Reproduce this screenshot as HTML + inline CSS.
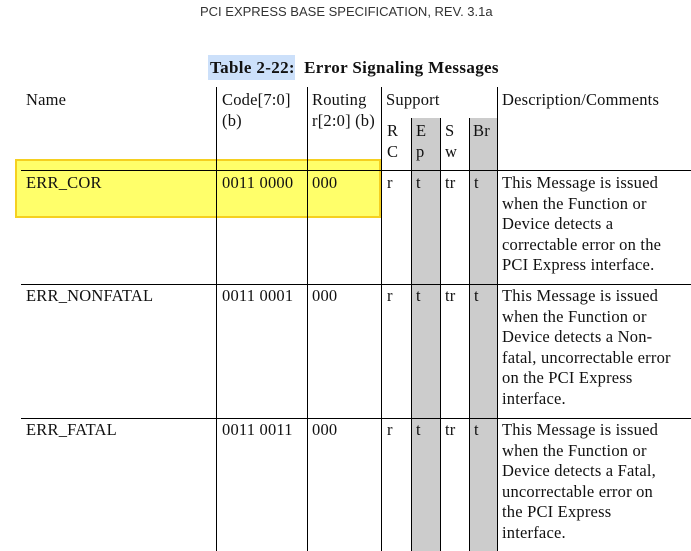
<!DOCTYPE html>
<html><head><meta charset="utf-8"><style>
body{margin:0;width:691px;height:551px;background:#fff;position:relative;overflow:hidden;font-family:"Liberation Serif",serif;font-size:16.5px;letter-spacing:0.2px;color:#111}
.a{position:absolute;white-space:nowrap;line-height:20.6px}
.v{position:absolute;width:1.3px;background:#000}
.h{position:absolute;height:1.3px;background:#000;left:21px;right:0}
.g{position:absolute;background:#cccccc;top:118px;bottom:0}
</style></head><body>
<div class="a" style="left:200px;top:4px;font-family:'Liberation Sans',sans-serif;font-size:13px;letter-spacing:0;color:#333;line-height:16px">PCI EXPRESS BASE SPECIFICATION, REV. 3.1a</div>
<div style="position:absolute;left:208px;top:55px;width:87px;height:25px;background:#cce0fa"></div>
<div class="a" style="left:210px;top:58px;font-weight:bold;font-size:17px;letter-spacing:0.35px">Table 2-22:&nbsp; Error Signaling Messages</div>

<div style="position:absolute;left:15px;top:159px;width:362px;height:55px;background:#ffff6a;border:2px solid #f5d020"></div>

<div class="g" style="left:412px;width:28px"></div>
<div class="g" style="left:469px;width:28px"></div>

<div class="v" style="left:216px;top:87px;bottom:0"></div>
<div class="v" style="left:307px;top:87px;bottom:0"></div>
<div class="v" style="left:381px;top:87px;bottom:0"></div>
<div class="v" style="left:411px;top:118px;bottom:0"></div>
<div class="v" style="left:440px;top:118px;bottom:0"></div>
<div class="v" style="left:469px;top:118px;bottom:0"></div>
<div class="v" style="left:497px;top:87px;bottom:0"></div>

<div class="h" style="top:170px"></div>
<div class="h" style="top:284px"></div>
<div class="h" style="top:418px"></div>

<div class="a" style="left:26px;top:90px">Name</div>
<div class="a" style="left:222px;top:90px">Code[7:0]<br>(b)</div>
<div class="a" style="left:312px;top:90px">Routing<br>r[2:0] (b)</div>
<div class="a" style="left:386px;top:90px">Support</div>
<div class="a" style="left:502px;top:90px">Description/Comments</div>
<div class="a" style="left:387px;top:121px">R<br>C</div>
<div class="a" style="left:416px;top:121px">E<br>p</div>
<div class="a" style="left:445px;top:121px">S<br>w</div>
<div class="a" style="left:473px;top:121px">Br</div>

<div class="a" style="left:26px;top:173px">ERR_COR</div>
<div class="a" style="left:222px;top:173px">0011 0000</div>
<div class="a" style="left:312px;top:173px">000</div>
<div class="a" style="left:387px;top:173px">r</div>
<div class="a" style="left:416px;top:173px">t</div>
<div class="a" style="left:445px;top:173px">tr</div>
<div class="a" style="left:474px;top:173px">t</div>
<div class="a" style="left:502px;top:173px">This Message is issued<br>when the Function or<br>Device detects a<br>correctable error on the<br>PCI Express interface.</div>

<div class="a" style="left:26px;top:286px">ERR_NONFATAL</div>
<div class="a" style="left:222px;top:286px">0011 0001</div>
<div class="a" style="left:312px;top:286px">000</div>
<div class="a" style="left:387px;top:286px">r</div>
<div class="a" style="left:416px;top:286px">t</div>
<div class="a" style="left:445px;top:286px">tr</div>
<div class="a" style="left:474px;top:286px">t</div>
<div class="a" style="left:502px;top:286px">This Message is issued<br>when the Function or<br>Device detects a Non-<br>fatal, uncorrectable error<br>on the PCI Express<br>interface.</div>

<div class="a" style="left:26px;top:420px">ERR_FATAL</div>
<div class="a" style="left:222px;top:420px">0011 0011</div>
<div class="a" style="left:312px;top:420px">000</div>
<div class="a" style="left:387px;top:420px">r</div>
<div class="a" style="left:416px;top:420px">t</div>
<div class="a" style="left:445px;top:420px">tr</div>
<div class="a" style="left:474px;top:420px">t</div>
<div class="a" style="left:502px;top:420px">This Message is issued<br>when the Function or<br>Device detects a Fatal,<br>uncorrectable error on<br>the PCI Express<br>interface.</div>
</body></html>
